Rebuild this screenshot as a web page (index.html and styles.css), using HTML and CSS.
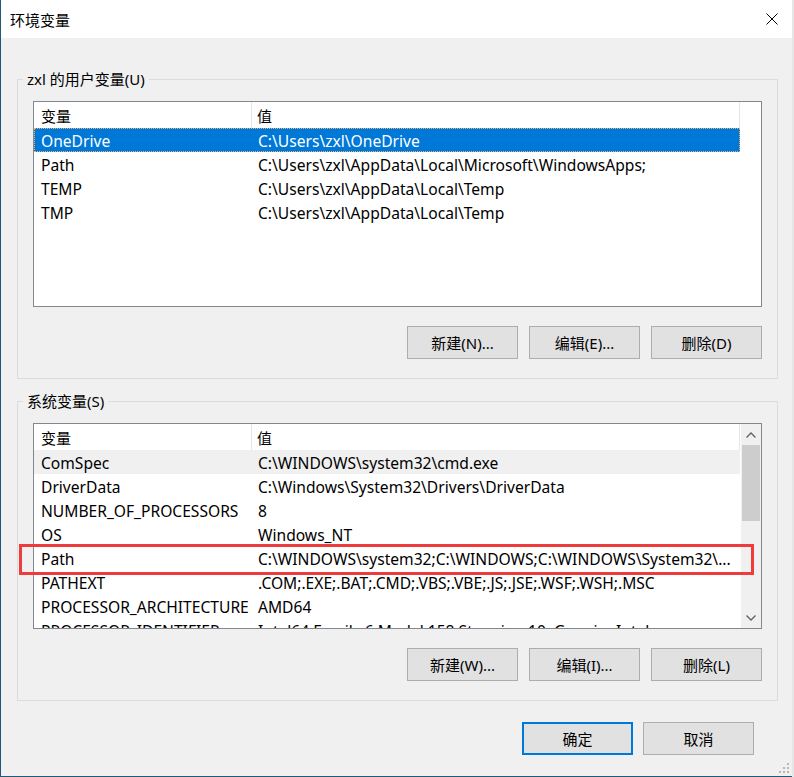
FILE: index.html
```html
<!DOCTYPE html>
<html lang="zh-CN">
<head>
    <meta charset="UTF-8">
    <title>环境变量</title>
    <link rel="stylesheet" href="styles.css">
</head>
<body>
    <div class="window">
        <!-- Barra de título -->
        <div class="titlebar">
            <span class="title">环境变量</span>
            <svg class="close" width="12" height="12" viewBox="0 0 12 12">
                <path d="M0.5 0.5L11.5 11.5M11.5 0.5L0.5 11.5" stroke="#000" stroke-width="1" fill="none"/>
            </svg>
        </div>

        <div class="content">
            <!-- Variáveis do usuário -->
            <fieldset class="group">
                <legend>zxl 的用户变量(U)</legend>
                <div class="group-body">
                    <div class="list">
                        <div class="table">
                            <div class="row head"><div class="c1">变量</div><div class="c2">值</div></div>
                            <div class="row selected"><div class="c1">OneDrive</div><div class="c2">C:\Users\zxl\OneDrive</div></div>
                            <div class="row"><div class="c1">Path</div><div class="c2">C:\Users\zxl\AppData\Local\Microsoft\WindowsApps;</div></div>
                            <div class="row"><div class="c1">TEMP</div><div class="c2">C:\Users\zxl\AppData\Local\Temp</div></div>
                            <div class="row"><div class="c1">TMP</div><div class="c2">C:\Users\zxl\AppData\Local\Temp</div></div>
                        </div>
                    </div>
                    <div class="button-row">
                        <button>新建(N)...</button>
                        <button>编辑(E)...</button>
                        <button>删除(D)</button>
                    </div>
                </div>
            </fieldset>

            <!-- Variáveis do sistema -->
            <fieldset class="group group-sys">
                <legend>系统变量(S)</legend>
                <div class="group-body">
                    <div class="list">
                        <div class="table">
                            <div class="row head"><div class="c1">变量</div><div class="c2">值</div></div>
                            <div class="row hover"><div class="c1">ComSpec</div><div class="c2">C:\WINDOWS\system32\cmd.exe</div></div>
                            <div class="row"><div class="c1">DriverData</div><div class="c2">C:\Windows\System32\Drivers\DriverData</div></div>
                            <div class="row"><div class="c1">NUMBER_OF_PROCESSORS</div><div class="c2">8</div></div>
                            <div class="row"><div class="c1">OS</div><div class="c2">Windows_NT</div></div>
                            <div class="row"><div class="c1">Path</div><div class="c2">C:\WINDOWS\system32;C:\WINDOWS;C:\WINDOWS\System32\...</div></div>
                            <div class="row"><div class="c1">PATHEXT</div><div class="c2">.COM;.EXE;.BAT;.CMD;.VBS;.VBE;.JS;.JSE;.WSF;.WSH;.MSC</div></div>
                            <div class="row"><div class="c1">PROCESSOR_ARCHITECTURE</div><div class="c2">AMD64</div></div>
                            <div class="row"><div class="c1">PROCESSOR_IDENTIFIER</div><div class="c2">Intel64 Family 6 Model 158 Stepping 10, GenuineIntel</div></div>
                        </div>
                        <div class="scrollbar">
                            <div class="sb-btn">
                                <svg width="10" height="6" viewBox="0 0 10 6"><polyline points="0.5,5.5 5,1 9.5,5.5" stroke="#606060" stroke-width="1.3" fill="none"/></svg>
                            </div>
                            <div class="sb-thumb"></div>
                            <div class="sb-track"></div>
                            <div class="sb-btn">
                                <svg width="10" height="6" viewBox="0 0 10 6"><polyline points="0.5,0.5 5,5 9.5,0.5" stroke="#606060" stroke-width="1.3" fill="none"/></svg>
                            </div>
                        </div>
                    </div>
                    <div class="button-row">
                        <button>新建(W)...</button>
                        <button>编辑(I)...</button>
                        <button>删除(L)</button>
                    </div>
                </div>
            </fieldset>

            <!-- Confirmar / Cancelar -->
            <div class="dialog-buttons">
                <button class="default">确定</button>
                <button>取消</button>
            </div>
        </div>

        <!-- Marcação vermelha -->
        <div class="highlight"></div>

        <svg class="grip" width="12" height="12" viewBox="0 0 12 12" fill="#b8b8b8">
            <rect x="9" y="1" width="2" height="2"/>
            <rect x="5" y="5" width="2" height="2"/>
            <rect x="9" y="5" width="2" height="2"/>
            <rect x="1" y="9" width="2" height="2"/>
            <rect x="5" y="9" width="2" height="2"/>
            <rect x="9" y="9" width="2" height="2"/>
        </svg>
    </div>
</body>
</html>
```

FILE: styles.css
```css
body {
    margin: 0;
    padding: 0;
    background-color: #e6e6e6;
    font-family: "Noto Sans", "Noto Sans CJK SC", sans-serif;
    font-size: 15px;
    color: #000;
}

.window {
    position: relative;
    width: 792px;
    height: 777px;
    box-sizing: border-box;
    background-color: #f0f0f0;
    border-left: 1px solid #1f5a7a;
    border-bottom: 1px solid #1f5a7a;
    display: flex;
    flex-direction: column;
}

/* Barra de título */
.titlebar {
    height: 38px;
    background-color: #fff;
    display: flex;
    align-items: center;
    justify-content: space-between;
    padding: 0 14px 0 9px;
    flex-shrink: 0;
}

.title {
    font-family: "Noto Sans CJK SC", sans-serif;
    font-size: 15px;
}

.close {
    display: block;
}

.content {
    padding: 0 14px 0 16px;
    display: flex;
    flex-direction: column;
}

/* Grupos */
.group {
    margin: 31px 0 0 0;
    padding: 0;
    min-width: 0;
    border: 1px solid #dcdcdc;
}

.group-sys {
    margin-top: 12px;
}

.group legend {
    margin-left: 5px;
    padding: 0 4px;
    line-height: 20px;
    font-size: 15px;
}

.group-body {
    padding: 12px 15px 19px 15px;
}

/* Lista */
.list {
    height: 206px;
    box-sizing: border-box;
    border: 1px solid #828790;
    background-color: #fff;
    display: flex;
    overflow: hidden;
    font-size: 15.6px;
}

.table {
    flex: 1;
    min-width: 0;
}

.row {
    display: flex;
    width: 706px;
    height: 24px;
    line-height: 26px;
    white-space: nowrap;
}

.row .c1 {
    width: 218px;
    padding-left: 7px;
    box-sizing: border-box;
    overflow: hidden;
    flex-shrink: 0;
}

.row .c2 {
    width: 488px;
    padding-left: 6px;
    box-sizing: border-box;
    overflow: hidden;
    flex-shrink: 0;
}

.row.head {
    height: 26px;
    line-height: 24px;
    padding-top: 2px;
    box-sizing: border-box;
    font-size: 15px;
}

.row.head .c1,
.row.head .c2 {
    border-right: 1px solid #e5e5e5;
    margin-top: -2px;
    padding-top: 2px;
    height: 26px;
}

.row.head .c2 {
    padding-left: 5px;
}

.row.selected {
    background-color: #0078d7;
    color: #fff;
    outline: 1px dotted #f2b26b;
    outline-offset: -1px;
}

.row.hover {
    background-color: #f0f0f0;
}

/* Barra de rolagem */
.scrollbar {
    width: 20px;
    flex-shrink: 0;
    background-color: #f0f0f0;
    display: flex;
    flex-direction: column;
}

.sb-btn {
    height: 21px;
    display: flex;
    align-items: center;
    justify-content: center;
    flex-shrink: 0;
}

.sb-thumb {
    height: 76px;
    margin: 0 1px;
    background-color: #cdcdcd;
}

.sb-track {
    flex: 1;
}

/* Botões */
.button-row {
    display: flex;
    justify-content: flex-end;
    gap: 11px;
    margin-top: 19px;
}

button {
    width: 111px;
    height: 33px;
    background-color: #e1e1e1;
    border: 1px solid #adadad;
    font-family: "Noto Sans", "Noto Sans CJK SC", sans-serif;
    font-size: 15px;
    color: #000;
    padding: 0;
}

.dialog-buttons {
    display: flex;
    justify-content: flex-end;
    gap: 10px;
    margin-top: 21px;
    padding-right: 24px;
}

.dialog-buttons button.default {
    border: 2px solid #0078d7;
}

/* Marcação vermelha sobre a linha Path */
.highlight {
    position: absolute;
    left: 18px;
    top: 544px;
    width: 735px;
    height: 31px;
    box-sizing: border-box;
    border: 3px solid #ef3b3b;
}

.grip {
    position: absolute;
    right: 2px;
    bottom: 2px;
}
```
